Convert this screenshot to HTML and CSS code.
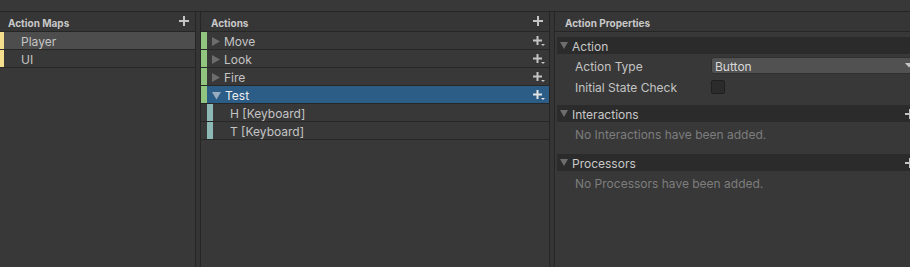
FILE: index.html
```html
<!DOCTYPE html>
<html>
<head>
<meta charset="utf-8">
<link rel="stylesheet" href="styles.css">
</head>
<body>
<div class="topbar"></div>
<div class="panels">
  <div class="panel maps">
    <div class="header hdr-maps">
      <span class="title">Action Maps</span>
      <svg class="hplus" width="10" height="10" viewBox="0 0 10 10"><rect x="0" y="4" width="10" height="2"/><rect x="4" y="0" width="2" height="10"/></svg>
    </div>
    <div class="row selected-dim"><span class="bar yellow"></span><span class="label map-label">Player</span></div>
    <div class="row"><span class="bar yellow"></span><span class="label map-label">UI</span></div>
  </div>

  <div class="panel actions">
    <div class="header hdr-actions">
      <span class="title">Actions</span>
      <svg class="hplus" width="10" height="10" viewBox="0 0 10 10"><rect x="0" y="4" width="10" height="2"/><rect x="4" y="0" width="2" height="10"/></svg>
    </div>
    <div class="row"><span class="bar green"></span><div class="rowbody">
      <svg class="tri-r" width="8" height="9" viewBox="0 0 8 9"><polygon points="0,0 8,4.5 0,9"/></svg>
      <span class="label">Move</span>
      <svg class="rplus" width="12" height="11" viewBox="0 0 12 11"><rect x="0" y="3.5" width="9" height="2"/><rect x="3.5" y="0" width="2" height="9"/><polygon points="8,8 12,8 10,10"/></svg>
    </div></div>
    <div class="row"><span class="bar green"></span><div class="rowbody">
      <svg class="tri-r" width="8" height="9" viewBox="0 0 8 9"><polygon points="0,0 8,4.5 0,9"/></svg>
      <span class="label">Look</span>
      <svg class="rplus" width="12" height="11" viewBox="0 0 12 11"><rect x="0" y="3.5" width="9" height="2"/><rect x="3.5" y="0" width="2" height="9"/><polygon points="8,8 12,8 10,10"/></svg>
    </div></div>
    <div class="row"><span class="bar green"></span><div class="rowbody">
      <svg class="tri-r" width="8" height="9" viewBox="0 0 8 9"><polygon points="0,0 8,4.5 0,9"/></svg>
      <span class="label">Fire</span>
      <svg class="rplus" width="12" height="11" viewBox="0 0 12 11"><rect x="0" y="3.5" width="9" height="2"/><rect x="3.5" y="0" width="2" height="9"/><polygon points="8,8 12,8 10,10"/></svg>
    </div></div>
    <div class="row"><span class="bar green"></span><div class="rowbody selected">
      <svg class="tri-d" width="9" height="8" viewBox="0 0 9 8"><polygon points="0,0 9,0 4.5,7.5"/></svg>
      <span class="label">Test</span>
      <svg class="rplus" width="12" height="11" viewBox="0 0 12 11"><rect x="0" y="3.5" width="9" height="2"/><rect x="3.5" y="0" width="2" height="9"/><polygon points="8,8 12,8 10,10"/></svg>
    </div></div>
    <div class="row binding"><span class="bar teal"></span><span class="label bind-label">H [Keyboard]</span></div>
    <div class="row binding"><span class="bar teal"></span><span class="label bind-label">T [Keyboard]</span></div>
  </div>

  <div class="panel props">
    <div class="header hdr-props">
      <span class="title">Action Properties</span>
    </div>
    <div class="section first">
      <div class="band">
        <svg class="tri-band" width="8" height="8" viewBox="0 0 8 8"><polygon points="0,0 8,0 4,7"/></svg>
        <span class="band-label">Action</span>
      </div>
      <div class="field">
        <span class="field-label">Action Type</span>
        <div class="dropdown"><span>Button</span>
          <svg class="dd-arrow" width="8" height="5" viewBox="0 0 8 5"><polygon points="0,0 8,0 4,4.5"/></svg>
        </div>
      </div>
      <div class="field">
        <span class="field-label">Initial State Check</span>
        <span class="checkbox"></span>
      </div>
    </div>
    <div class="section">
      <div class="band">
        <svg class="tri-band" width="8" height="8" viewBox="0 0 8 8"><polygon points="0,0 8,0 4,7"/></svg>
        <span class="band-label">Interactions</span>
        <svg class="bplus" width="10" height="10" viewBox="0 0 10 10"><rect x="0" y="4" width="10" height="2"/><rect x="4" y="0" width="2" height="10"/></svg>
      </div>
      <div class="empty">No Interactions have been added.</div>
    </div>
    <div class="section">
      <div class="band">
        <svg class="tri-band" width="8" height="8" viewBox="0 0 8 8"><polygon points="0,0 8,0 4,7"/></svg>
        <span class="band-label">Processors</span>
        <svg class="bplus" width="10" height="10" viewBox="0 0 10 10"><rect x="0" y="4" width="10" height="2"/><rect x="4" y="0" width="2" height="10"/></svg>
      </div>
      <div class="empty">No Processors have been added.</div>
    </div>
  </div>
</div>
</body>
</html>
```
FILE: styles.css
```css
html, body {
  margin: 0;
  padding: 0;
}
body {
  width: 910px;
  height: 267px;
  overflow: hidden;
  background: #383838;
  font-family: Inter, "Noto Sans", "DejaVu Sans", sans-serif;
  font-size: 12px;
  color: #c4c4c4;
}
.topbar {
  height: 11px;
  border-bottom: 1px solid #262626;
  background: #383838;
}
.panels {
  display: flex;
  gap: 4px;
  height: 255px;
  background: #353535;
}
.panel {
  background: #383838;
  display: flex;
  flex-direction: column;
  overflow: hidden;
}
.maps {
  width: 195px;
  border-right: 1px solid #262626;
}
.actions {
  width: 348px;
  border-left: 1px solid #262626;
  border-right: 1px solid #262626;
}
.props {
  flex: 1;
  border-left: 1px solid #262626;
}
.header {
  height: 17px;
  padding-top: 2px;
  border-bottom: 1px solid #262626;
  display: flex;
  align-items: center;
  background: #363636;
  flex-shrink: 0;
}
.title {
  font-size: 10px;
  font-weight: 700;
  color: #c8c8c8;
  flex: 1;
}
.hdr-maps { padding-left: 8px; padding-right: 6px; }
.hdr-actions { padding-left: 10px; padding-right: 6px; }
.hdr-props { padding-left: 10px; }
.hplus {
  fill: #c4c4c4;
  margin-top: -4px;
}
.row {
  height: 17px;
  border-bottom: 1px solid #272727;
  display: flex;
  align-items: stretch;
  flex-shrink: 0;
}
.row.selected-dim {
  background: #4d4d4d;
}
.bar {
  display: block;
  flex-shrink: 0;
}
.bar.yellow { width: 4px; background: #f4de8e; }
.bar.green { width: 6px; background: #91c47e; }
.bar.teal { width: 6px; background: #8cb8b6; margin-left: 6px; }
.label {
  line-height: 17px;
  padding-top: 1px;
  white-space: nowrap;
}
.map-label { padding-left: 17px; }
.bind-label { padding-left: 17px; }
.rowbody {
  flex: 1;
  display: flex;
  align-items: center;
  padding-left: 5px;
  padding-right: 4px;
}
.rowbody .label { flex: 1; padding-left: 4px; }
.rowbody.selected {
  background: #2c5d87;
  color: #ececec;
}
.tri-r { fill: #6d6d6d; margin-top: 1px; }
.tri-d { fill: #98abbf; margin-top: 2px; }
.rplus { fill: #c4c4c4; margin-top: 2px; }
.rowbody.selected .rplus { fill: #e4e4e4; }
.section.first { margin-top: 5px; }
.section { display: flex; flex-direction: column; }
.band {
  height: 17px;
  margin-left: 2px;
  background: #2b2b2b;
  display: flex;
  align-items: center;
  padding-left: 3px;
}
.tri-band { fill: #6d6d6d; margin-right: 4px; margin-top: 1px; }
.band-label {
  flex: 1;
  line-height: 17px;
  padding-top: 1px;
  color: #c8c8c8;
}
.bplus { fill: #c4c4c4; margin-right: -5px; }
.field {
  height: 17px;
  display: flex;
  align-items: center;
  padding-left: 20px;
  margin-top: 3px;
}
.field + .field { margin-top: 4px; margin-bottom: 10px; }
.field-label {
  width: 136px;
  line-height: 17px;
  padding-top: 1px;
}
.dropdown {
  flex: 1;
  height: 15px;
  background: #515151;
  border: 1px solid #303030;
  border-radius: 3px;
  margin-right: -4px;
  display: flex;
  align-items: center;
  padding-left: 3px;
  color: #d8d8d8;
}
.dropdown span { flex: 1; padding-top: 1px; }
.dd-arrow { fill: #c4c4c4; margin-right: 0px; }
.checkbox {
  width: 12px;
  height: 12px;
  background: #2b2b2b;
  border: 1px solid #1f1f1f;
  border-radius: 2px;
}
.empty {
  padding: 4px 0 11px 20px;
  line-height: 17px;
  color: #7d7d7d;
}
```
